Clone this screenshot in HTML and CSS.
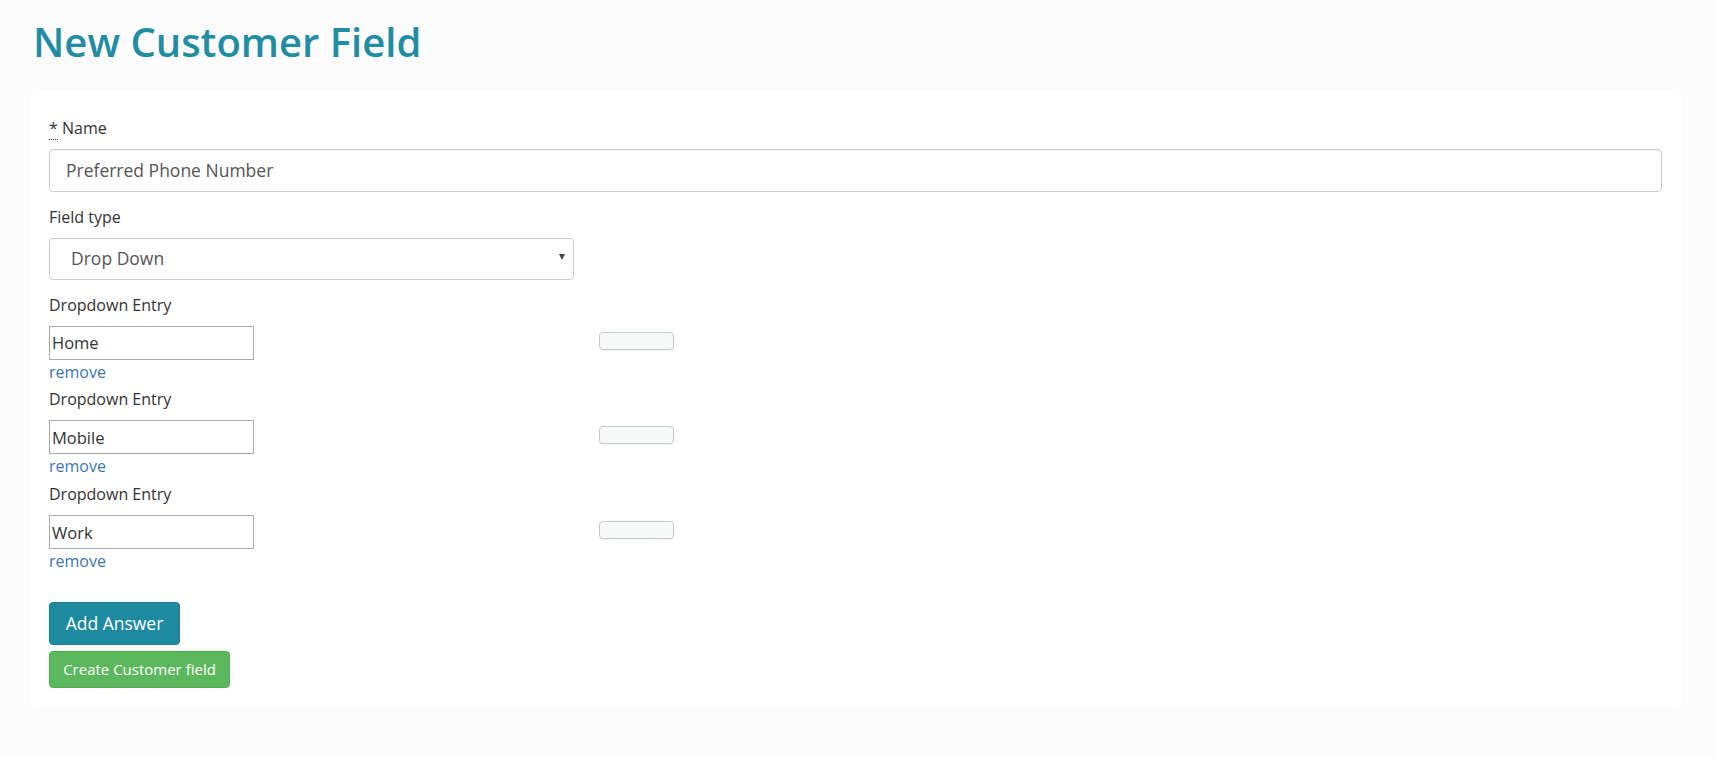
FILE: index.html
```html
<!DOCTYPE html>
<html lang="en">
<head>
<meta charset="utf-8">
<title>New Customer Field</title>
<link rel="stylesheet" href="styles.css">
</head>
<body>
<div class="page">
  <h1 class="title">New Customer Field</h1>
  <div class="card">
    <form class="form">
      <div class="form-group">
        <label class="label"><abbr title="required">*</abbr> Name</label>
        <input class="form-control" type="text" value="Preferred Phone Number">
      </div>
      <div class="form-group">
        <label class="label">Field type</label>
        <div class="select">
          <span class="select-value">Drop Down</span>
          <span class="select-arrow"></span>
        </div>
      </div>

      <div class="entry">
        <label class="label">Dropdown Entry</label>
        <div class="entry-row">
          <input class="entry-input" type="text" value="Home">
          <span class="mini-btn"></span>
        </div>
        <a class="remove" href="#">remove</a>
      </div>
      <div class="entry">
        <label class="label">Dropdown Entry</label>
        <div class="entry-row">
          <input class="entry-input" type="text" value="Mobile">
          <span class="mini-btn"></span>
        </div>
        <a class="remove" href="#">remove</a>
      </div>
      <div class="entry">
        <label class="label">Dropdown Entry</label>
        <div class="entry-row">
          <input class="entry-input" type="text" value="Work">
          <span class="mini-btn"></span>
        </div>
        <a class="remove" href="#">remove</a>
      </div>

      <div class="actions">
        <button class="btn btn-add" type="button">Add Answer</button>
        <button class="btn btn-create" type="button">Create Customer field</button>
      </div>
    </form>
  </div>
</div>
</body>
</html>
```

FILE: styles.css
```css
html, body {
  margin: 0;
  padding: 0;
}
body {
  background: #fcfcfc;
  font-family: "Open Sans", "Noto Sans", sans-serif;
  font-size: 16px;
  line-height: 22.86px;
  color: #333;
}
.page {
  padding: 0 36px 0 31px;
}
.title {
  margin: 0;
  padding: 17px 0 0 2px;
  height: 90px;
  box-sizing: border-box;
  font-size: 40px;
  line-height: 50px;
  font-weight: 600;
  color: #208da3;
}
.card {
  background: #fff;
  border-radius: 4px;
  padding: 27px 19px 18px 18px;
  width: 1650px;
  box-sizing: border-box;
}
.form {
  display: flex;
  flex-direction: column;
}
.form-group {
  margin-bottom: 14px;
}
.label {
  display: block;
  margin-bottom: 9px;
  font-size: 16px;
  line-height: 22.86px;
  color: #333;
}
abbr {
  text-decoration: none;
  border-bottom: 1px dotted #333;
  cursor: help;
}
.form-control {
  display: block;
  width: 100%;
  height: 43px;
  box-sizing: border-box;
  border: 1px solid #ccc;
  border-radius: 4px;
  padding: 0 16px;
  font-family: inherit;
  font-size: 17.5px;
  color: #555;
  background: #fff;
  box-shadow: inset 0 1px 1px rgba(0,0,0,0.05);
}
.select {
  width: 525px;
  height: 42px;
  box-sizing: border-box;
  border: 1px solid #ccc;
  border-radius: 4px;
  display: flex;
  align-items: center;
  justify-content: space-between;
  padding: 0 8px 0 21px;
  font-size: 17.5px;
  color: #555;
  background: #fff;
}
.select-arrow {
  width: 0;
  height: 0;
  border-left: 3.5px solid transparent;
  border-right: 3.5px solid transparent;
  border-top: 6px solid #444;
  margin-top: -3px;
}
.entry {
  margin-bottom: 5px;
}
.entry-row {
  display: flex;
  align-items: flex-start;
  gap: 345px;
}
.entry-input {
  width: 205px;
  height: 34px;
  box-sizing: border-box;
  border: 1px solid #a9a9a9;
  padding: 0 2px;
  margin: 0;
  font-family: inherit;
  font-size: 16.5px;
  color: #333;
  background: #fff;
  border-radius: 0;
}
.mini-btn {
  display: block;
  width: 75px;
  height: 18px;
  margin-top: 6px;
  box-sizing: border-box;
  border: 1px solid #c3cccc;
  border-radius: 4px;
  background: #f8f9f9;
  box-shadow: 0 1px 1px rgba(0,0,0,0.06);
}
.remove {
  display: block;
  margin-top: 1px;
  color: #3a76b4;
  text-decoration: none;
  font-size: 16px;
  line-height: 22.86px;
  width: max-content;
}
.actions {
  display: flex;
  flex-direction: column;
  align-items: flex-start;
  gap: 6px;
  margin-top: 24px;
}
.btn {
  font-family: inherit;
  border-radius: 4px;
  cursor: pointer;
  color: #fff;
  box-sizing: border-box;
  margin: 0;
}
.btn-add {
  height: 43px;
  width: 131px;
  padding: 0;
  font-size: 17.5px;
  background: #1e8aa0;
  border: 1px solid #1b7f94;
}
.btn-create {
  height: 37px;
  width: 181px;
  padding: 0;
  font-size: 15px;
  background: #5cb85c;
  border: 1px solid #4cae4c;
}
```
